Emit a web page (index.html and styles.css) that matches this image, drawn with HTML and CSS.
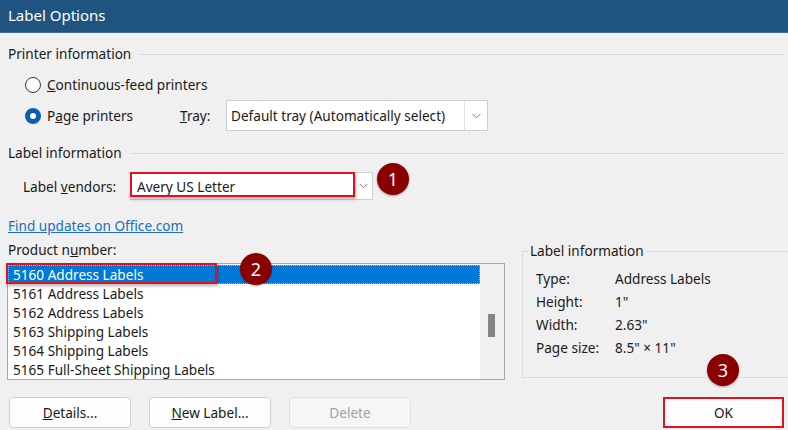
FILE: index.html
```html
<!DOCTYPE html>
<html lang="en">
<head>
    <meta charset="UTF-8">
    <meta name="viewport" content="width=device-width, initial-scale=1.0">
    <title>Label Options</title>
    <link rel="stylesheet" href="styles.css">
</head>
<body>
    <div class="titlebar">Label Options</div>
    <div class="dialog">
        <div class="group-title">Printer information</div>
        <div class="radios">
            <div class="radio-row">
                <span class="radio"></span>
                <span><u>C</u>ontinuous-feed printers</span>
            </div>
            <div class="radio-row">
                <div class="radio-label">
                    <span class="radio checked"></span>
                    <span>P<u>a</u>ge printers</span>
                </div>
                <span class="tray-label"><u>T</u>ray:</span>
                <div class="select tray-select">
                    <span class="select-text">Default tray (Automatically select)</span>
                    <span class="select-arrow">
                        <svg width="9" height="6" viewBox="0 0 9 6"><path d="M0.5 0.8 L4.5 4.8 L8.5 0.8" fill="none" stroke="#7a7a7a" stroke-width="1"/></svg>
                    </span>
                </div>
            </div>
        </div>

        <div class="group-title second">Label information</div>
        <div class="vendor-row">
            <span class="vendor-label">Label <u>v</u>endors:</span>
            <div class="select vendor-select">
                <span class="select-text">Avery US Letter</span>
                <span class="select-arrow">
                    <svg width="9" height="6" viewBox="0 0 9 6"><path d="M0.5 0.8 L4.5 4.8 L8.5 0.8" fill="none" stroke="#7a7a7a" stroke-width="1"/></svg>
                </span>
                <span class="highlight vendor-mark"></span>
                <span class="badge badge-1">1</span>
            </div>
        </div>

        <a class="link" href="#">Find updates on Office.com</a>

        <div class="middle">
            <div class="product">
                <div class="product-label">Product n<u>u</u>mber:</div>
                <div class="list">
                    <div class="items">
                        <div class="item selected">5160 Address Labels</div>
                        <div class="item">5161 Address Labels</div>
                        <div class="item">5162 Address Labels</div>
                        <div class="item">5163 Shipping Labels</div>
                        <div class="item">5164 Shipping Labels</div>
                        <div class="item">5165 Full-Sheet Shipping Labels</div>
                    </div>
                    <div class="scrollbar"><span class="thumb"></span></div>
                    <span class="highlight item-mark"></span>
                    <span class="badge badge-2">2</span>
                </div>
            </div>
            <fieldset class="info">
                <legend>Label information</legend>
                <div class="info-grid">
                    <span>Type:</span><span>Address Labels</span>
                    <span>Height:</span><span>1"</span>
                    <span>Width:</span><span>2.63"</span>
                    <span>Page size:</span><span>8.5" &times; 11"</span>
                </div>
            </fieldset>
        </div>

        <div class="buttons">
            <button><u>D</u>etails...</button>
            <button><u>N</u>ew Label...</button>
            <button disabled>Delete</button>
            <button class="ok">OK<span class="badge badge-3">3</span></button>
        </div>
    </div>
</body>
</html>
```

FILE: styles.css
```css
body {
    margin: 0;
    background: #f0f0f0;
    font-family: "Noto Sans", "Open Sans", sans-serif;
    font-size: 13.6px;
    color: #1a1a1a;
    overflow: hidden;
}
.titlebar {
    height: 33px;
    box-sizing: border-box;
    background: #1f5480;
    border-bottom: 1px solid #3c6e98;
    color: #fff;
    font-size: 15px;
    line-height: 31px;
    padding-left: 8px;
}
.dialog {
    width: 788px;
    box-sizing: border-box;
    padding: 11px 4px 0 8px;
}
.group-title {
    display: flex;
    align-items: center;
    height: 20px;
    line-height: 20px;
}
.group-title::after {
    content: "";
    flex: 1;
    border-top: 1px solid #dadada;
    margin-left: 8px;
}
.group-title.second {
    margin-top: 12px;
}
.radios {
    margin-top: 5px;
    padding-left: 17px;
}
.radio-row {
    display: flex;
    align-items: center;
    height: 31px;
}
.radio-label {
    display: flex;
    align-items: center;
    width: 155px;
}
.radio {
    width: 16px;
    height: 16px;
    box-sizing: border-box;
    border: 1px solid #3a3a3a;
    border-radius: 50%;
    background: #fbfbfb;
    margin-right: 6px;
}
.radio.checked {
    border: 5px solid #0a5fb4;
    background: #fff;
}
.tray-label {
    width: 46px;
}
.select {
    position: relative;
    display: flex;
    box-sizing: border-box;
    background: #fff;
    border: 1px solid #cfcfcf;
}
.tray-select {
    width: 262px;
    height: 31px;
}
.select-text {
    flex: 1;
    padding-left: 4px;
    display: flex;
    align-items: center;
}
.select-arrow {
    width: 22px;
    border-left: 1px solid #e2e2e2;
    display: flex;
    align-items: center;
    justify-content: center;
}
.vendor-row {
    display: flex;
    align-items: center;
    margin-top: 9px;
    padding-left: 15px;
}
.vendor-label {
    width: 107px;
}
.vendor-select {
    width: 243px;
    height: 28px;
}
.vendor-select .select-text {
    padding-left: 6px;
}
.vendor-select .select-arrow {
    width: 18px;
}
.highlight {
    position: absolute;
    box-sizing: border-box;
    border: 2px solid #e3111b;
    box-shadow: 1px 2px 3px rgba(0, 0, 0, 0.3);
}
.vendor-mark {
    left: -1px;
    top: -1px;
    width: 225px;
    height: 25px;
}
.badge {
    position: absolute;
    width: 32px;
    height: 32px;
    border-radius: 50%;
    background: #8a0000;
    color: #fff;
    font-size: 18px;
    line-height: 32px;
    text-align: center;
    box-shadow: 0 1px 2px rgba(0, 0, 0, 0.35);
}
.badge-1 {
    left: 246px;
    top: -10px;
}
.link {
    display: block;
    width: max-content;
    margin-top: 16px;
    line-height: 20px;
    color: #1a6fc2;
}
.middle {
    display: flex;
    align-items: flex-start;
    margin-top: 4px;
}
.product {
    width: 497px;
}
.product-label {
    line-height: 20px;
}
.list {
    position: relative;
    display: flex;
    width: 498px;
    height: 117px;
    box-sizing: border-box;
    margin: 3px 0 0 -1px;
    border: 1px solid #a9a9a9;
    background: #fff;
}
.items {
    flex: 1;
    padding-top: 1px;
}
.item {
    height: 19px;
    line-height: 19px;
    padding-left: 5px;
    white-space: nowrap;
}
.item.selected {
    background: #0078d7;
    color: #fff;
    outline: 1px dotted #8cc4f0;
    outline-offset: -1px;
}
.scrollbar {
    width: 24px;
    background: #f0f0f0;
}
.thumb {
    display: block;
    width: 7px;
    height: 23px;
    margin: 50px 0 0 8px;
    background: #858585;
}
.item-mark {
    left: -2px;
    top: -1px;
    width: 211px;
    height: 21px;
}
.badge-2 {
    left: 232px;
    top: -11px;
}
.info {
    flex: none;
    width: 290px;
    box-sizing: border-box;
    margin: 1px 0 0 17px;
    padding: 6px 0 16px 13px;
    border: 1px solid #dcdcdc;
    height: 137px;
}
.info legend {
    padding: 0 2px;
    margin-left: -8px;
    line-height: 20px;
}
.info-grid {
    display: grid;
    grid-template-columns: 79px auto;
    grid-auto-rows: 23px;
    align-items: center;
}
.buttons {
    display: flex;
    gap: 18px;
    margin-top: 17px;
    padding-left: 1px;
}
button {
    position: relative;
    width: 122px;
    height: 31px;
    background: #fdfdfd;
    border: 1px solid #d0d0d0;
    border-radius: 4px;
    font-family: inherit;
    font-size: 13.6px;
    color: #1a1a1a;
    padding: 0;
}
button:disabled {
    background: #f6f6f6;
    border-color: #e0e0e0;
    color: #a2a2a2;
}
button.ok {
    width: 121px;
    margin-left: auto;
    border: 2px solid #e3111b;
    border-radius: 0;
    box-shadow: 0 1px 0 #5b82b5;
}
.badge-3 {
    left: 42px;
    top: -45px;
}
```
